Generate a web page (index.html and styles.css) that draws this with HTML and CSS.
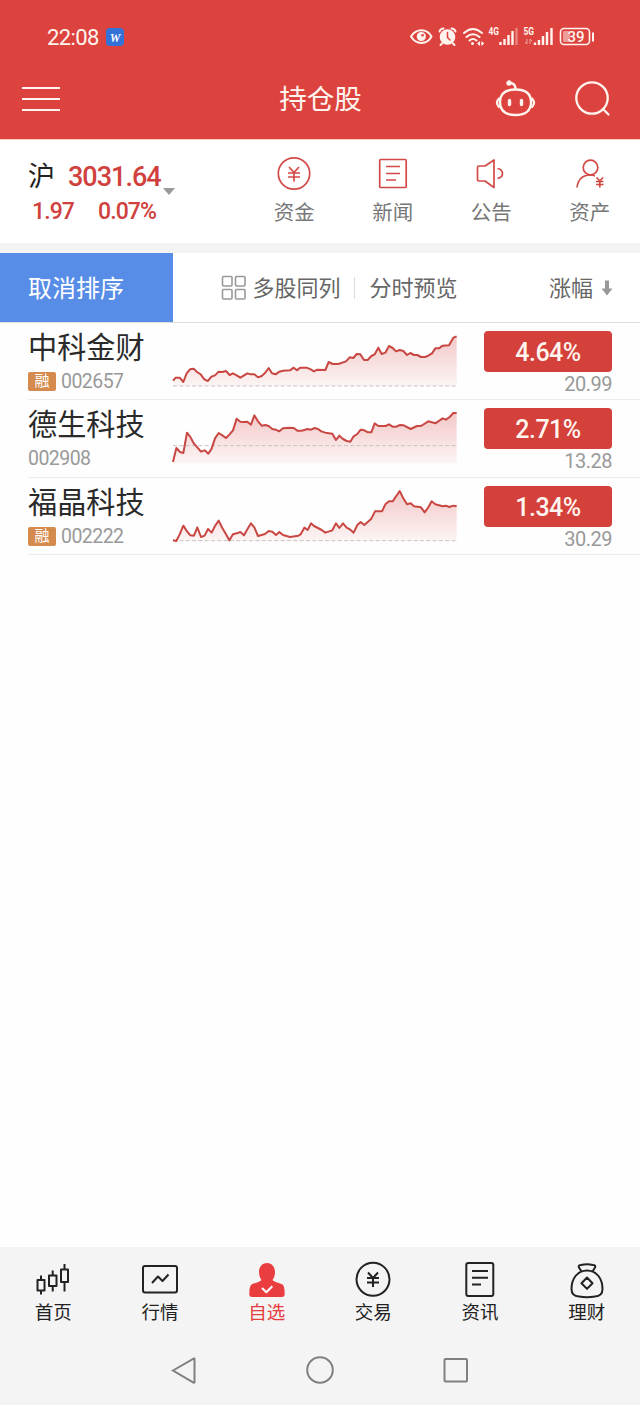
FILE: index.html
```html
<!DOCTYPE html>
<html lang="zh-CN">
<head>
    <meta charset="UTF-8">
    <meta name="viewport" content="width=device-width, initial-scale=1.0">
    <title>持仓股</title>
    <link rel="stylesheet" href="styles.css">
</head>
<body>
    <header class="header">
        <div class="status-bar">
            <span class="time">22:08</span>
            <svg class="app-badge" width="18" height="18" viewBox="0 0 18 18">
                <rect width="18" height="18" rx="4" fill="#3272d9"/>
                <text x="9" y="13.500" text-anchor="middle" class="badge-text">W</text>
            </svg>
            <svg class="status-icons" width="188" height="24" viewBox="0 0 188 24">
                <!-- Auge -->
                <g fill="none" stroke="#fff3ee" stroke-width="2">
                    <path d="M1 11.500C6 3 17 3 21.500 11.500C17 20 6 20 1 11.500Z"/>
                    <circle cx="11.300" cy="11.500" r="3.600" fill="#fff3ee"/>
                </g>
                <circle cx="12.600" cy="10.200" r="1.300" fill="#dc433f"/>
                <!-- Wecker -->
                <g stroke="#fff3ee" stroke-width="2" stroke-linecap="round" fill="none">
                    <circle cx="37.500" cy="12" r="7.800" fill="#fff3ee" stroke="none"/>
                    <path d="M29.500 6.500Q30.500 3.500 33.500 3.500M45.500 6.500Q44.500 3.500 41.500 3.500M32 18.500l-1.500 1.500M43 18.500l1.500 1.500"/>
                    <path d="M37.500 7.500v5l2.500 2.500" stroke="#dc433f" stroke-width="1.500"/>
                </g>
                <!-- WLAN -->
                <g stroke="#fff3ee" stroke-width="2" fill="none" stroke-linecap="round">
                    <path d="M54 8Q63 0 72 8M56.500 12Q63 6.500 69.500 12M59.500 15.500Q63 12.500 66.500 15.500"/>
                    <circle cx="62.500" cy="18.500" r="1.500" fill="#fff3ee" stroke="none"/>
                    <path d="M67 18.500l3-2.500v5zM71.300 16l3 2.500-3 2.500z" fill="#fff3ee" stroke="none"/>
                </g>
                <text x="78.500" y="10" class="net-text" textLength="10.500" lengthAdjust="spacingAndGlyphs">4G</text>
                <path d="M90.500 20v-3M94.500 20v-6M98.500 20v-10M102.500 20v-14" class="bars"/>
                <path d="M106.500 20V3" class="bars dim"/>
                <text x="113.500" y="10" class="net-text" textLength="10.500" lengthAdjust="spacingAndGlyphs">5G</text>
                <path d="M117 14v5l-2-2M120 19v-5l2 2" stroke="#f0a6a1" fill="none"/>
                <path d="M125 20v-2.500M129 20v-5M133 20v-9M137 20v-13M141.500 20V3" class="bars"/>
                <!-- Akku -->
                <rect x="150.500" y="3.500" width="29" height="16" rx="3.500" fill="none" stroke="#fff3ee" stroke-width="1.600"/>
                <rect x="153" y="6" width="7" height="11" rx="1" fill="#ee9c98"/>
                <path d="M183 7.500v9" stroke="#fff3ee" stroke-width="2"/>
                <text x="166" y="17" text-anchor="middle" class="battery-text">39</text>
            </svg>
        </div>
        <div class="nav">
            <svg width="40" height="28" viewBox="0 0 40 28" fill="none" stroke="#fff5ee" stroke-width="2">
                <path d="M1 3h38M1 14h38M1 25h38"/>
            </svg>
            <h1>持仓股</h1>
            <div class="nav-icons">
                <svg width="42" height="38" viewBox="0 0 42 38" fill="none" stroke="#fff5ee" stroke-width="2.300" stroke-linecap="round">
                    <path d="M20.500 9.500C31.500 9.500 36 14 36 22S31.500 35 20.500 35 5 30 5 22 9.500 9.500 20.500 9.500Z"/>
                    <path d="M4 18.500Q0 22.500 4 27M37 18.500Q41 22.500 37 27M20.500 9Q20.500 3 14.500 3"/>
                    <circle cx="14" cy="3" r="1.500" fill="#fff5ee"/>
                    <path d="M14.500 20.500v4M26.500 20.500v4" stroke-width="3.400"/>
                </svg>
                <svg width="38" height="38" viewBox="0 0 38 38" fill="none" stroke="#fff5ee" stroke-width="2.300" stroke-linecap="round">
                    <circle cx="18" cy="18" r="15.700"/>
                    <path d="M29 29l5.500 5.500"/>
                </svg>
            </div>
        </div>
    </header>

    <section class="overview">
        <div class="index">
            <div class="index-main">
                <span class="market">沪</span>
                <span class="value">3031.64</span>
                <i class="caret"></i>
            </div>
            <div class="index-change">
                <span>1.97</span>
                <span>0.07%</span>
            </div>
        </div>
        <div class="shortcuts">
            <div class="shortcut">
                <svg width="36" height="36" viewBox="0 0 36 36">
                    <circle cx="18" cy="17.500" r="15.700"/>
                    <path d="M13 11l5 5.500 5-5.500M12 17h12M12 21h12M18 16.500v9"/>
                </svg>
                <span>资金</span>
            </div>
            <div class="shortcut">
                <svg width="36" height="36" viewBox="0 0 36 36">
                    <rect x="4.700" y="3.500" width="26.500" height="28" rx="1"/>
                    <path d="M11 10.500h14M11 17.500h14M11 24h10"/>
                </svg>
                <span>新闻</span>
            </div>
            <div class="shortcut">
                <svg width="36" height="36" viewBox="0 0 36 36">
                    <path d="M6 10h6L21 4v27.500l-9-6.500H6Q4.500 25 4.500 23.500V11.500Q4.500 10 6 10ZM24.500 12.500Q29.500 13.500 29.500 17.500T24.500 22.500"/>
                </svg>
                <span>公告</span>
            </div>
            <div class="shortcut">
                <svg width="36" height="36" viewBox="0 0 36 36">
                    <circle cx="18.500" cy="11.500" r="7.300"/>
                    <path d="M5 31.500C6 23.500 11 19 18.500 19q2.500 0 4.500 1M24.500 21.500l3.300 3.500 3.300-3.500M24 25.500h7.500M24 28.500h7.500M27.800 25.500v6"/>
                </svg>
                <span>资产</span>
            </div>
        </div>
    </section>

    <section class="toolbar">
        <div class="cancel-sort">取消排序</div>
        <div class="multi">
            <svg width="26" height="26" viewBox="0 0 26 26" fill="none" stroke="#999" stroke-width="1.600">
                <rect x="1.500" y="1.500" width="9.500" height="9.500" rx="1"/>
                <rect x="14.500" y="1.500" width="9.500" height="9.500" rx="1"/>
                <rect x="1.500" y="14.500" width="9.500" height="9.500" rx="1"/>
                <rect x="14.500" y="14.500" width="9.500" height="9.500" rx="1"/>
            </svg>
            <span>多股同列</span>
        </div>
        <div class="preview">分时预览</div>
        <div class="sort">
            <span>涨幅</span>
            <svg width="12" height="16" viewBox="0 0 12 16"><path d="M4 0.500h4v8h3.500L6 15.500 0.500 8.500H4z" fill="#999"/></svg>
        </div>
    </section>

    <main class="stocks">
        <div class="stock">
            <div class="info">
                <div class="name">中科金财</div>
                <div class="code"><span class="tag">融</span>002657</div>
            </div>
            <svg class="chart" viewBox="21 -6 858 231" data-base="183">
                <path class="base" d="M24 183H876"/>
                <polyline points="24,167 32,158 44,158 55,171 65,145 75,133 86,131 96,141 107,148 118,163 129,168 139,155 150,151 161,140 172,141 183,138 194,150 204,145 215,151 226,158 247,145 257,148 268,148 279,157 290,153 300,144 311,129 321,145 332,148 343,140 354,137 375,136 386,128 396,136 405,128 425,128 437,133 447,139 457,134 481,135 491,111 503,117 520,117 543,109 554,97 565,99 575,87 586,88 597,105 608,105 619,93 629,88 640,68 650,87 661,83 672,63 683,69 693,79 704,75 715,78 726,90 736,84 747,90 757,90 768,96 780,96 790,92 801,85 811,70 822,70 833,62 852,61 865,38 875,34"/>
            </svg>
            <div class="quote">
                <div class="percent">4.64%</div>
                <div class="price">20.99</div>
            </div>
        </div>
        <div class="stock">
            <div class="info">
                <div class="name">德生科技</div>
                <div class="code plain">002908</div>
            </div>
            <svg class="chart" viewBox="21 226 858 231" data-base="416">
                <path class="base" d="M24 363H876"/>
                <polyline points="24,412 34,370 45,382 55,385 66,324 76,337 87,357 97,368 108,381 119,377 130,387 140,372 150,341 161,325 172,332 183,340 193,330 204,317 215,282 226,291 237,292 247,291 258,300 268,272 279,290 290,303 301,301 311,304 322,313 332,315 343,320 354,311 375,309 386,310 397,318 410,318 428,313 438,315 449,310 459,313 469,320 481,324 502,327 513,346 523,333 534,343 545,349 556,351 566,335 577,328 587,315 598,317 609,323 619,323 629,296 640,304 662,304 672,299 683,306 694,306 705,301 716,302 737,313 756,304 768,304 790,290 811,296 833,281 843,285 854,277 865,265 875,265"/>
            </svg>
            <div class="quote">
                <div class="percent">2.71%</div>
                <div class="price">13.28</div>
            </div>
        </div>
        <div class="stock">
            <div class="info">
                <div class="name">福晶科技</div>
                <div class="code"><span class="tag">融</span>002222</div>
            </div>
            <svg class="chart" viewBox="21 458 858 231" data-base="646">
                <path class="base" d="M24 646H876"/>
                <polyline points="24,645 34,647 44,627 55,601 66,618 76,630 87,631 97,606 108,635 119,631 129,611 140,622 150,602 161,586 172,608 183,627 193,645 204,627 215,624 226,620 237,630 247,612 258,594 268,606 279,632 300,626 311,617 322,619 333,629 343,620 354,629 375,635 400,631 407,627 418,607 428,614 438,594 447,602 459,608 470,614 481,622 502,615 513,594 523,608 534,594 545,607 556,613 566,622 577,599 587,590 598,599 619,580 630,558 651,558 661,537 672,528 683,528 704,497 715,519 726,537 737,534 747,543 768,546 779,561 790,546 800,528 811,537 833,543 843,541 853,545 865,541 875,543"/>
            </svg>
            <div class="quote">
                <div class="percent">1.34%</div>
                <div class="price">30.29</div>
            </div>
        </div>
    </main>

    <footer class="footer">
        <div class="tabs">
            <div class="tab">
                <svg width="40" height="40" viewBox="0 0 40 40">
                    <path d="M4.500 20h7v10.500h-7zM8 15.500V20M8 30.500v4M16 15.500h7.500v10.500H16zM19.700 10.500v5M19.700 26v5.500M28 9.500h7v12.500h-7zM31.500 4v5.500M31.500 22v9.500"/>
                </svg>
                <span>首页</span>
            </div>
            <div class="tab">
                <svg width="40" height="40" viewBox="0 0 40 40">
                    <rect x="3" y="6" width="34" height="26.500" rx="2"/>
                    <path d="M12 23l6-6.500 4.500 4.500 6-6.500"/>
                </svg>
                <span>行情</span>
            </div>
            <div class="tab active">
                <svg width="40" height="40" viewBox="0 0 40 40">
                    <path class="solid" d="M20 3C15 3 12 7 12 12C12 16 13.500 18.500 14.500 20C13 22 7 23 4.500 24.500Q2.300 26 2.300 34Q2.300 37 5 37H35Q37.700 37 37.700 34Q37.700 26 35.500 24.500C33 23 27 22 25.500 20C26.500 18.500 28 16 28 12C28 7 25 3 20 3Z"/>
                    <path class="check" d="M15 28l4.300 4.300 6-6"/>
                </svg>
                <span>自选</span>
            </div>
            <div class="tab">
                <svg width="40" height="40" viewBox="0 0 40 40">
                    <circle cx="20" cy="19.300" r="16.500"/>
                    <path d="M15 12.500l5 5.500 5-5.500M14 18h12M14 22.500h12M20 18v9"/>
                </svg>
                <span>交易</span>
            </div>
            <div class="tab">
                <svg width="40" height="40" viewBox="0 0 40 40">
                    <rect x="6.300" y="3" width="27" height="33" rx="2"/>
                    <path d="M12 11h16M12 17.700h16M12 24.500h9"/>
                </svg>
                <span>资讯</span>
            </div>
            <div class="tab">
                <svg width="40" height="40" viewBox="0 0 40 40">
                    <path d="M14.500 11.500L12 7.500Q11 5 14 5Q20 3.500 26 5Q29 5 28 7.500L25.500 11.500"/>
                    <path d="M20 10.500C10 10.500 4.500 19 4.500 29Q4.500 36 12 36.500Q20 38 28 36.500Q35.500 36 35.500 29C35.500 19 30 10.500 20 10.500ZM20 17.500l5.500 5.700-5.500 5.700-5.500-5.700z"/>
                </svg>
                <span>理财</span>
            </div>
        </div>
        <div class="system-nav">
            <svg width="32" height="32" viewBox="0 0 32 32"><path d="M5 16.500L26 4.500Q26.500 4.300 26.500 5V28Q26.500 29 25.500 28.500Z"/></svg>
            <svg width="32" height="32" viewBox="0 0 32 32"><circle cx="16" cy="16" r="12.800"/></svg>
            <svg width="32" height="32" viewBox="0 0 32 32"><rect x="4.500" y="5" width="22.500" height="22.500" rx="1"/></svg>
        </div>
    </footer>

    <svg width="0" height="0" class="defs">
        <defs>
            <linearGradient id="fade" x1="0" y1="0" x2="0" y2="1">
                <stop offset="0" stop-color="#d5403c" stop-opacity="0.28"/>
                <stop offset="1" stop-color="#d5403c" stop-opacity="0.05"/>
            </linearGradient>
        </defs>
    </svg>

    <script>
        // Fläche unter jeder Kurve zeichnen
        document.querySelectorAll(".chart").forEach((chart) => {
            const line = chart.querySelector("polyline");
            const base = chart.dataset.base;
            const area = document.createElementNS("http://www.w3.org/2000/svg", "polygon");
            area.setAttribute("points", `24,${base} ${line.getAttribute("points")} 875,${base}`);
            area.setAttribute("fill", "url(#fade)");
            chart.insertBefore(area, chart.firstChild);
        });
    </script>
</body>
</html>
```
FILE: styles.css
```css
* {
    box-sizing: border-box;
}
body {
    margin: 0;
    height: 1405px;
    display: flex;
    flex-direction: column;
    background-color: #fefefe;
    font-family: Roboto, "Noto Sans CJK SC", sans-serif;
    overflow: hidden;
}
svg {
    display: block;
    flex: none;
}
.defs {
    position: absolute;
}

/* Kopfbereich */
.header {
    height: 140px;
    background-color: #dc433f;
    color: #fff5ee;
    border-bottom: 1px solid #f6cfc0;
}
.status-bar {
    display: flex;
    align-items: center;
    height: 74px;
    padding: 0 42px 0 47px;
}
.time {
    padding-top: 2px;
    font-size: 22px;
    letter-spacing: -0.6px;
    line-height: 30px;
}
.app-badge {
    margin-left: 7px;
}
.badge-text {
    font: italic bold 12px "Liberation Serif", serif;
    fill: #fff;
}
.status-icons {
    margin-left: auto;
}
.net-text {
    font: bold 11.5px "Roboto", sans-serif;
    fill: #fff3ee;
}
.battery-text {
    font: 500 15px "Roboto", sans-serif;
    fill: #fff3ee;
}
.bars {
    stroke: #fff3ee;
    stroke-width: 2.4;
}
.dim {
    stroke: #e9837f;
}
.nav {
    display: grid;
    grid-template-columns: 1fr auto 1fr;
    align-items: center;
    height: 50px;
    padding: 0 28px 0 21px;
}
.nav h1 {
    margin: 0 -8px 0 8px;
    padding: 2px 8px 0 0;
    font-size: 27.5px;
    font-weight: 400;
    line-height: 40px;
}
.nav-icons {
    display: flex;
    justify-content: flex-end;
    gap: 37px;
}

/* Index und Schnellzugriff */
.overview {
    display: flex;
    height: 113px;
    background-color: #fff;
    border-bottom: 10px solid #f3f3f3;
}
.index {
    width: 245px;
    padding: 19px 0 0 28px;
    color: #d0413e;
    font-weight: 500;
}
.index-main {
    display: flex;
    align-items: center;
    height: 36px;
}
.market {
    width: 40px;
    font-size: 27px;
    font-weight: 400;
    line-height: 36px;
    color: #222;
}
.value {
    font-size: 27px;
    line-height: 36px;
    letter-spacing: -1px;
}
.caret {
    margin: 28px 0 0 2px;
    border: 6px solid transparent;
    border-top: 7px solid #999;
    border-bottom: 0;
}
.index-change {
    display: flex;
    gap: 24px;
    padding-left: 4px;
    font-size: 23px;
    line-height: 34px;
    letter-spacing: -0.9px;
}
.shortcuts {
    display: flex;
    width: 394px;
    padding-top: 16px;
}
.shortcut {
    flex: 1;
    display: flex;
    flex-direction: column;
    align-items: center;
    font-size: 20.5px;
    line-height: 30px;
    color: #777;
    gap: 6px;
}
.shortcut svg {
    fill: none;
    stroke: #d24a47;
    stroke-width: 1.7;
    stroke-linejoin: round;
}

/* Sortierleiste */
.toolbar {
    display: flex;
    align-items: center;
    height: 70px;
    font-size: 22px;
    line-height: 32px;
    color: #666;
    background-color: #fff;
    border-bottom: 1px solid #dedede;
}
.cancel-sort {
    width: 172.5px;
    height: 69px;
    padding: 2px 0 0 28px;
    font-size: 24px;
    line-height: 69px;
    color: #fff;
    background-color: #588de7;
}
.multi {
    display: flex;
    align-items: center;
    gap: 6px;
    width: 182px;
    height: 22px;
    padding-left: 48px;
    border-right: 1px solid #ddd;
}
.multi span {
    padding-top: 3px;
}
.preview {
    padding: 3px 0 0 15px;
}
.sort {
    display: flex;
    align-items: center;
    gap: 8px;
    margin-left: auto;
    padding-right: 27px;
}
.sort span {
    padding-top: 3px;
}

/* Aktienliste */
.stock {
    display: flex;
    height: 77.3px;
    background: linear-gradient(#ececec, #ececec) 28px 100% / 612px 1px no-repeat;
}
.info {
    width: 172px;
    padding-left: 28px;
}
.name {
    margin-top: 4px;
    font-size: 29.2px;
    line-height: 42px;
    color: #2a2a2a;
}
.code {
    display: flex;
    align-items: center;
    height: 25px;
    font-size: 19.5px;
    letter-spacing: -0.55px;
    color: #999;
}
.plain {
    height: 24px;
}
.tag {
    width: 28px;
    height: 19px;
    margin-right: 5px;
    border-radius: 2px;
    background-color: #d58b4e;
    color: #fff;
    font-size: 15px;
    line-height: 19px;
    letter-spacing: 0;
    text-align: center;
}
.chart {
    width: 286px;
    height: 77px;
}
.chart polyline {
    fill: none;
    stroke: #c94743;
    stroke-width: 6;
    stroke-linejoin: round;
}
.base {
    fill: none;
    stroke: #c8c2c2;
    stroke-width: 3;
    stroke-dasharray: 12 7;
}
.quote {
    width: 128px;
    margin-left: 26px;
    padding-top: 8px;
}
.percent {
    height: 41px;
    border-radius: 4px;
    background-color: #d4403a;
    color: #fff5ef;
    font-size: 25px;
    font-weight: 500;
    line-height: 43px;
    letter-spacing: -0.5px;
    text-align: center;
}
.price {
    font-size: 20px;
    line-height: 24px;
    letter-spacing: -0.5px;
    text-align: right;
    color: #999;
}

/* Untere Navigation */
.footer {
    height: 158px;
    margin-top: auto;
    background-color: #f4f4f4;
}
.tabs {
    display: flex;
    padding-top: 13px;
}
.tab {
    flex: 1;
    display: flex;
    flex-direction: column;
    align-items: center;
    font-size: 18.5px;
    line-height: 24px;
    color: #222;
}
.tab span {
    padding-top: 1px;
}
.tab svg {
    fill: none;
    stroke: #222;
    stroke-width: 2;
    stroke-linejoin: round;
}
.tab.active {
    color: #e43d40;
}
.tab .solid {
    fill: #e93d40;
    stroke: none;
}
.tab .check {
    stroke: #fff;
}
.system-nav {
    display: flex;
    justify-content: center;
    gap: 104px;
    padding-top: 29px;
}
.system-nav svg {
    fill: none;
    stroke: #808080;
    stroke-width: 2;
}
```
